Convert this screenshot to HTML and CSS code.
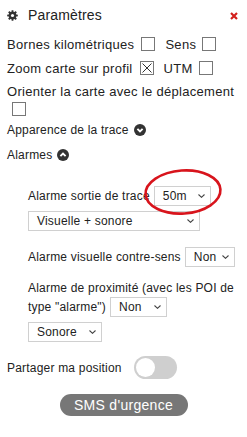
FILE: index.html
```html
<!DOCTYPE html>
<html lang="fr">
<head>
<meta charset="utf-8">
<title>Paramètres</title>
<link rel="stylesheet" href="styles.css">
</head>
<body>
<div class="panel">
  <div class="header">
    <div class="title">
      <svg class="gear" viewBox="0 0 12 12" width="11" height="11">
        <g fill="#333">
          <rect x="4.9" y="0.2" width="2.2" height="11.6" rx="0.5"/>
          <rect x="4.9" y="0.2" width="2.2" height="11.6" rx="0.5" transform="rotate(45 6 6)"/>
          <rect x="4.9" y="0.2" width="2.2" height="11.6" rx="0.5" transform="rotate(90 6 6)"/>
          <rect x="4.9" y="0.2" width="2.2" height="11.6" rx="0.5" transform="rotate(135 6 6)"/>
          <circle cx="6" cy="6" r="4.1"/>
        </g>
        <circle cx="6" cy="6" r="1.7" fill="#fff"/>
      </svg>
      <span>Paramètres</span>
    </div>
    <svg class="close" viewBox="0 0 8 8" width="8" height="8">
      <path d="M1 1 L7 7 M7 1 L1 7" stroke="#d3201c" stroke-width="2.2"/>
    </svg>
  </div>

  <div class="row big">
    <span>Bornes kilométriques</span>
    <span class="cb first"></span>
    <span>Sens</span>
    <span class="cb second"></span>
  </div>
  <div class="row big row2">
    <span>Zoom carte sur profil</span>
    <span class="cb first"><svg viewBox="0 0 12 12" width="12" height="12"><path d="M1.5 1.5 L10.5 10.5 M10.5 1.5 L1.5 10.5" stroke="#333" stroke-width="1"/></svg></span>
    <span>UTM</span>
    <span class="cb second"></span>
  </div>
  <div class="orient big">Orienter la carte avec le déplacement</div>
  <span class="cb solo"></span>

  <div class="line apparence">Apparence de la trace
    <svg class="chev" viewBox="0 0 12 12" width="12" height="12"><circle cx="6" cy="6" r="6" fill="#333"/><path d="M3.4 4.9 L6 7.5 L8.6 4.9" stroke="#fff" stroke-width="1.9" fill="none"/></svg>
  </div>
  <div class="line alarmes">Alarmes
    <svg class="chev" viewBox="0 0 12 12" width="12" height="12"><circle cx="6" cy="6" r="6" fill="#333"/><path d="M3.4 7.1 L6 4.5 L8.6 7.1" stroke="#fff" stroke-width="1.9" fill="none"/></svg>
  </div>

  <div class="alarms">
    <div class="arow sortie">
      <span>Alarme sortie de trace</span>
      <span class="sel w57"><span>50m</span><svg viewBox="0 0 7 4" width="7" height="4"><path d="M0.5 0.5 L3.5 3.3 L6.5 0.5" stroke="#444" stroke-width="1.1" fill="none"/></svg></span>
    </div>
    <div class="sel w172 block"><span>Visuelle + sonore</span><svg viewBox="0 0 7 4" width="7" height="4"><path d="M0.5 0.5 L3.5 3.3 L6.5 0.5" stroke="#444" stroke-width="1.1" fill="none"/></svg></div>
    <div class="arow contre">
      <span>Alarme visuelle contre-sens</span>
      <span class="sel w50"><span>Non</span><svg viewBox="0 0 7 4" width="7" height="4"><path d="M0.5 0.5 L3.5 3.3 L6.5 0.5" stroke="#444" stroke-width="1.1" fill="none"/></svg></span>
    </div>
    <div class="prox">Alarme de proximité (avec les POI de</div>
    <div class="arow prox2">
      <span>type "alarme")</span>
      <span class="sel w57"><span>Non</span><svg viewBox="0 0 7 4" width="7" height="4"><path d="M0.5 0.5 L3.5 3.3 L6.5 0.5" stroke="#444" stroke-width="1.1" fill="none"/></svg></span>
    </div>
    <div class="sel w74 block sonore"><span>Sonore</span><svg viewBox="0 0 7 4" width="7" height="4"><path d="M0.5 0.5 L3.5 3.3 L6.5 0.5" stroke="#444" stroke-width="1.1" fill="none"/></svg></div>
  </div>

  <div class="share">
    <span>Partager ma position</span>
    <span class="toggle"><span class="knob"></span></span>
  </div>

  <div class="btnwrap">
    <span class="btn">SMS d'urgence</span>
  </div>

  <svg class="mark" viewBox="0 0 80 48" width="80" height="48">
    <ellipse cx="40" cy="24" rx="37.5" ry="21.5" fill="none" stroke="#d8141c" stroke-width="2.6" transform="rotate(-4 40 24)"/>
  </svg>
</div>
</body>
</html>
```

FILE: styles.css
```css
html, body {
  margin: 0;
  padding: 0;
  background: #fff;
}

.panel {
  position: relative;
  width: 247px;
  height: 437px;
  box-sizing: border-box;
  padding-left: 7px;
  font-family: "Liberation Sans", Arial, sans-serif;
  font-size: 12px;
  letter-spacing: 0.2px;
  color: #222;
  overflow: hidden;
}

.header {
  height: 30px;
  display: flex;
  align-items: center;
  justify-content: space-between;
  padding-right: 9px;
}

.title {
  display: flex;
  align-items: center;
  font-size: 14px;
  letter-spacing: 0.15px;
  color: #222;
}

.gear {
  margin-right: 10px;
  margin-top: 1px;
}

.close {
  margin-top: 1px;
}

.big {
  font-size: 13px;
  letter-spacing: 0.3px;
}

.row {
  display: flex;
  align-items: center;
  height: 20px;
  margin-top: 4px;
}

.cb {
  display: inline-flex;
  align-items: center;
  justify-content: center;
  width: 14px;
  height: 14px;
  box-sizing: border-box;
  border: 1px solid #777;
  background: #fff;
  flex: none;
}

.cb.first {
  margin-left: 7px;
  margin-right: 10px;
}

.cb.second {
  margin-left: 6px;
}

.orient {
  line-height: 16px;
  margin-top: 6px;
}

.cb.solo {
  display: block;
  margin: 2px 0 0 5px;
}

.line {
  display: flex;
  align-items: center;
  height: 16px;
}

.chev {
  margin-left: 5px;
}

.apparence {
  margin-top: 6px;
}

.alarmes {
  margin-top: 9px;
}

.alarms {
  padding-left: 21px;
}

.arow {
  display: flex;
  align-items: center;
  gap: 4px;
  height: 20px;
}

.sortie {
  margin-top: 23px;
}

.contre {
  margin-top: 16px;
}

.sel {
  display: inline-flex;
  align-items: center;
  justify-content: space-between;
  box-sizing: border-box;
  height: 20px;
  line-height: 14px;
  border: 1px solid #d0d0d0;
  padding: 0 5px 0 8px;
  background: #fff;
  color: #222;
  letter-spacing: 0.2px;
  flex: none;
}

.sel svg {
  flex: none;
}

.sel.block {
  display: flex;
  margin-top: 5px;
}

.w50 { width: 50px; }
.w57 { width: 57px; }
.w74 { width: 74px; }
.w172 { width: 172px; }

.prox {
  margin-top: 12px;
  line-height: 18px;
  white-space: nowrap;
}

.prox2 {
  margin-top: 0;
}

.sonore {
  margin-top: 5px;
}

.share {
  display: flex;
  align-items: center;
  height: 23px;
  margin-top: 14px;
}

.toggle {
  display: inline-block;
  position: relative;
  width: 43px;
  height: 23px;
  border-radius: 12px;
  background: #cfcfcf;
  margin-left: 12px;
}

.knob {
  position: absolute;
  left: 2px;
  top: 2px;
  width: 19px;
  height: 19px;
  border-radius: 50%;
  background: #fff;
}

.btnwrap {
  display: flex;
  justify-content: center;
  margin-top: 15px;
  padding-right: 7px;
}

.btn {
  display: inline-flex;
  align-items: center;
  justify-content: center;
  width: 128px;
  height: 22px;
  border-radius: 11px;
  background: #777;
  color: #fff;
  font-size: 14px;
  letter-spacing: 0.3px;
}

.mark {
  position: absolute;
  left: 143px;
  top: 168px;
}
```
